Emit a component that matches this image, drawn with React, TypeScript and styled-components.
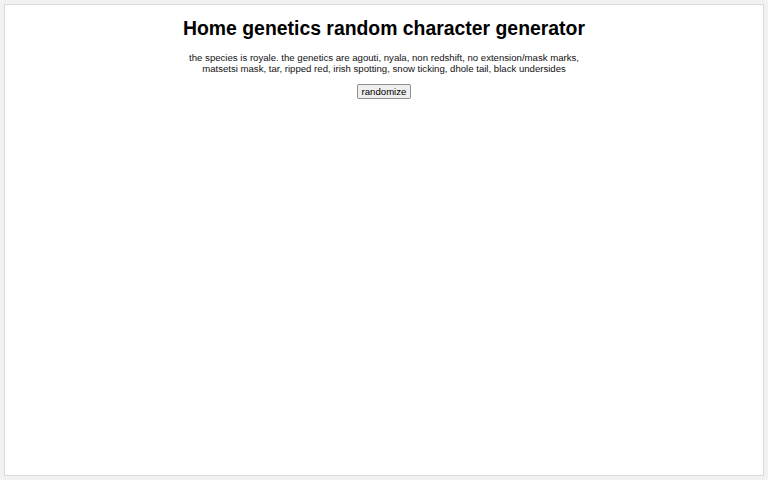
import React, { useState } from 'react';
import styled, { createGlobalStyle } from 'styled-components'

const GlobalStyle = createGlobalStyle`
  html, body {
    margin: 0;
    padding: 0;
    background: #f2f2f2;
    font-family: "Liberation Sans", Arial, sans-serif;
  }
`

const species = ['royale', 'common', 'feral', 'wild']
const genes = [
  'agouti', 'nyala', 'non redshift', 'no extension/mask marks',
  'matsetsi mask', 'tar', 'ripped red', 'irish spotting',
  'snow ticking', 'dhole tail', 'black undersides',
]

const App: React.FC = () => {
  const [kind, setKind] = useState(species[0])
  const [list, setList] = useState(genes)

  const randomize = () => {
    setKind(species[Math.floor(Math.random() * species.length)])
    setList([...genes].sort(() => Math.random() - 0.5))
  }

  return (
    <>
      <GlobalStyle />
      <Page>
        <Card>
          <Title>Home genetics random character generator</Title>
          <Result>the species is {kind}. the genetics are {list.join(', ')}</Result>
          <Button onClick={randomize}>randomize</Button>
        </Card>
      </Page>
    </>
  )
}

const Page = styled.div`
  padding: 4px;
  height: 480px;
  box-sizing: border-box;
`

const Card = styled.div`
  height: 472px;
  box-sizing: border-box;
  background: #fff;
  border: 1px solid #dadada;
  display: flex;
  flex-direction: column;
  align-items: center;
  padding-top: 12px;
`

const Title = styled.h1`
  margin: 0;
  font-size: 19.4px;
  font-weight: 700;
  color: #000;
  line-height: 23px;
`

const Result = styled.p`
  margin: 12px 0 0;
  width: 394px;
  text-align: center;
  font-size: 9.6px;
  line-height: 11px;
  color: #111;
`

const Button = styled.button`
  margin-top: 10px;
  font-family: "Liberation Sans", Arial, sans-serif;
  font-size: 9.6px;
  padding: 1px 4px;
  background: #efefef;
  border: 1px solid #8f8f8f;
  border-radius: 2px;
  color: #000;
`

export default App;
